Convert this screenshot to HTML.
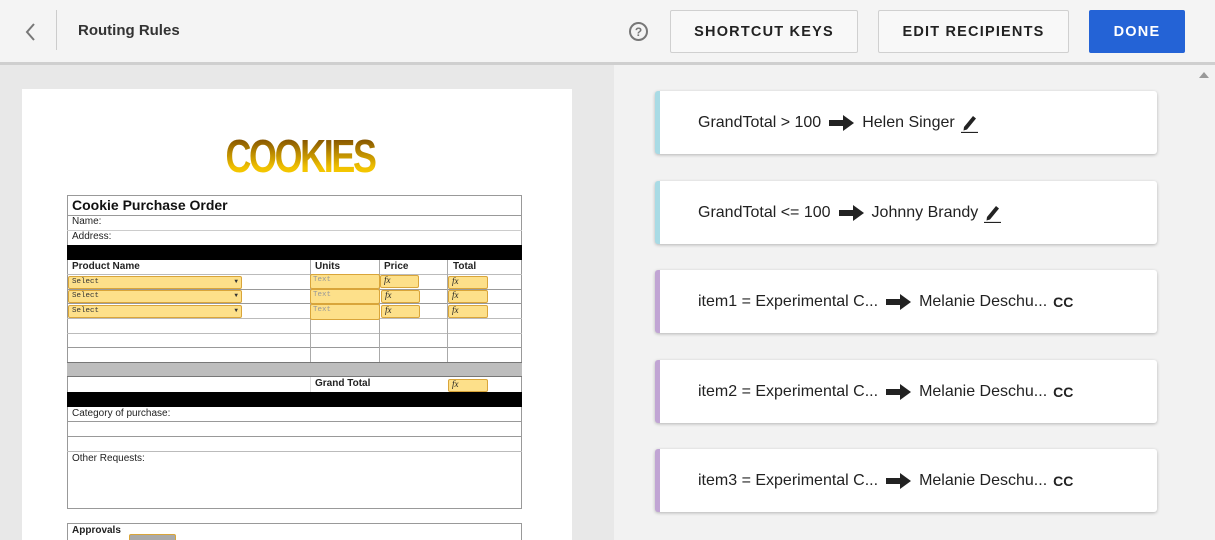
<!DOCTYPE html>
<html style="overflow:hidden;width:1215px;height:540px"><head><meta charset="utf-8"><style>
*{box-sizing:border-box;margin:0;padding:0}
body{width:1215px;height:540px;overflow:hidden;background:#f2f2f2;font-family:"Liberation Sans",sans-serif;position:relative}
.hdr{position:absolute;left:0;top:0;width:1215px;height:65px;background:#f4f4f4;border-bottom:3px solid #cfcfcf}
.btn{position:absolute;top:10px;height:43px;border:1px solid #d0d0d0;background:#f8f8f8;border-radius:2px;font-weight:bold;font-size:14.5px;letter-spacing:1.2px;color:#222;display:flex;align-items:center;justify-content:center}
.left{position:absolute;left:0;top:65px;width:614px;height:475px;background:#e8e8e8}
.paper{position:absolute;left:22px;top:89px;width:550px;height:451px;background:#fff}
.a{position:absolute}
.hl{position:absolute;height:1px;background:#999}
.vl{position:absolute;width:1px;background:#aaa}
.t{position:absolute;font-size:10px;color:#222;font-family:"Liberation Sans",sans-serif}
.f{position:absolute;background:#fde08a;border:1.5px solid #d9a53a;border-radius:2px}
.ft{font-family:"Liberation Serif",serif;font-style:italic;font-size:9px;color:#222;padding-left:3px;line-height:9px}
.sel{font-family:"Liberation Mono",monospace;font-size:7.5px;color:#333;padding-left:3px;line-height:10px}
.txt{font-family:"Liberation Mono",monospace;font-size:7.5px;color:#999;padding-left:2px;line-height:10px}
.card{position:absolute;left:655px;width:502px;height:63px;background:#fff;border-radius:3px;box-shadow:0 1px 3px rgba(0,0,0,.25);border-left:5px solid #a9dbe5;font-size:16px;color:#222;display:flex;align-items:center;padding-left:38px}
.card.p{border-left-color:#c1a5d4}
.arr{display:inline-block;width:26px;height:18px;margin:0 7px 0 8px;vertical-align:middle}
.cc{font-weight:bold;font-size:14px;margin-left:6px}
</style></head><body>
<div class="hdr">
 <svg class="a" style="left:24px;top:22px" width="14" height="20"><path d="M10 2 L3 10 L10 18" stroke="#777" stroke-width="2" fill="none"/></svg>
 <div class="a" style="left:56px;top:10px;width:1px;height:40px;background:#ccc"></div>
 <div class="a" style="left:78px;top:22px;font-size:15px;font-weight:bold;color:#333">Routing Rules</div>
 <svg class="a" style="left:628px;top:21px" width="21" height="21"><circle cx="10.5" cy="10.5" r="8.5" stroke="#777" stroke-width="2" fill="none"/><text x="10.5" y="15" text-anchor="middle" font-size="12" font-weight="bold" fill="#777" font-family="Liberation Sans">?</text></svg>
 <div class="btn" style="left:670px;width:188px">SHORTCUT KEYS</div>
 <div class="btn" style="left:878px;width:191px">EDIT RECIPIENTS</div>
 <div class="btn" style="left:1089px;width:96px;background:#2463d6;border-color:#2463d6;color:#fff">DONE</div>
</div>
<div class="left"></div>
<svg class="a" style="left:1199px;top:72px" width="10" height="7"><path d="M0 6 L5 0 L10 6Z" fill="#999"/></svg>
<div class="paper"></div>
<div class="a" style="left:200px;top:128px;width:200px;text-align:center;font-family:'Liberation Sans Narrow','Liberation Sans',sans-serif;font-weight:bold;font-size:46px;line-height:56px;letter-spacing:-3px;white-space:nowrap;transform:scaleX(.78);background:linear-gradient(#5a2a00,#f0c000 70%,#ffd800);-webkit-background-clip:text;background-clip:text;color:transparent">COOKIES</div>
<div class="a" style="left:67px;top:195px;width:455px;height:314px;border:1px solid #999"></div>
<div class="hl" style="left:67px;top:215px;width:455px"></div>
<div class="hl" style="left:67px;top:230px;width:455px;background:#ccc"></div>
<div class="a" style="left:67px;top:245px;width:455px;height:15px;background:#000"></div>
<div class="hl" style="left:67px;top:274px;width:455px;background:#bbb"></div>
<div class="hl" style="left:67px;top:289px;width:455px"></div>
<div class="hl" style="left:67px;top:303px;width:455px"></div>
<div class="hl" style="left:67px;top:318px;width:455px;background:#bbb"></div>
<div class="hl" style="left:67px;top:333px;width:455px;background:#bbb"></div>
<div class="hl" style="left:67px;top:347px;width:455px"></div>
<div class="a" style="left:67px;top:362px;width:455px;height:15px;background:#bdbdbd;border-top:1px solid #777;border-bottom:1px solid #777"></div>
<div class="a" style="left:67px;top:392px;width:455px;height:15px;background:#000"></div>
<div class="hl" style="left:67px;top:421px;width:455px"></div>
<div class="hl" style="left:67px;top:436px;width:455px"></div>
<div class="hl" style="left:67px;top:451px;width:455px;background:#bbb"></div>
<div class="vl" style="left:310px;top:260px;height:102px"></div>
<div class="vl" style="left:379px;top:260px;height:102px"></div>
<div class="vl" style="left:447px;top:260px;height:102px"></div>
<div class="vl" style="left:310px;top:377px;height:15px;background:#ddd"></div>
<div class="t" style="left:72px;top:197px;font-size:14px;font-weight:bold;color:#111">Cookie Purchase Order</div>
<div class="t" style="left:72px;top:216px">Name:</div>
<div class="t" style="left:72px;top:231px">Address:</div>
<div class="t" style="left:72px;top:261px;font-weight:bold">Product Name</div>
<div class="t" style="left:315px;top:261px;font-weight:bold">Units</div>
<div class="t" style="left:384px;top:261px;font-weight:bold">Price</div>
<div class="t" style="left:453px;top:261px;font-weight:bold">Total</div>
<div class="t" style="left:315px;top:378px;font-weight:bold">Grand Total</div>
<div class="t" style="left:72px;top:408px">Category of purchase:</div>
<div class="t" style="left:72px;top:453px">Other Requests:</div>
<div class="f sel" style="left:68px;top:276px;width:174px;height:13px">Select<span style="position:absolute;right:3px;font-size:6px">▼</span></div>
<div class="f sel" style="left:68px;top:290px;width:174px;height:13px">Select<span style="position:absolute;right:3px;font-size:6px">▼</span></div>
<div class="f sel" style="left:68px;top:305px;width:174px;height:13px">Select<span style="position:absolute;right:3px;font-size:6px">▼</span></div>
<div class="f txt" style="left:310px;top:274px;width:70px;height:15px">Text</div>
<div class="f txt" style="left:310px;top:289px;width:70px;height:15px">Text</div>
<div class="f txt" style="left:310px;top:304px;width:70px;height:16px">Text</div>
<div class="f ft" style="left:380px;top:275px;width:39px;height:13px">fx</div>
<div class="f ft" style="left:381px;top:290px;width:39px;height:13px">fx</div>
<div class="f ft" style="left:381px;top:305px;width:39px;height:13px">fx</div>
<div class="f ft" style="left:448px;top:276px;width:40px;height:13px">fx</div>
<div class="f ft" style="left:448px;top:290px;width:40px;height:13px">fx</div>
<div class="f ft" style="left:448px;top:305px;width:40px;height:13px">fx</div>
<div class="f ft" style="left:448px;top:379px;width:40px;height:13px">fx</div>
<div class="a" style="left:67px;top:523px;width:455px;height:17px;border:1px solid #999;border-bottom:none"></div>
<div class="t" style="left:72px;top:525px;font-weight:bold">Approvals</div>
<div class="a" style="left:129px;top:534px;width:47px;height:6px;background:#aaa;border:1px solid #d9a53a;border-bottom:none;border-radius:2px 2px 0 0"></div>
<svg width="0" height="0" style="position:absolute"><defs>
<symbol id="ar" viewBox="0 0 26 18"><path d="M0 6 H14 V1 L25 9 L14 17 V12 H0Z" fill="#222"/></symbol>
<symbol id="pen" viewBox="0 0 18 20"><path d="M4 14 L13 3 L16 5.5 L7 16.5 L3.5 17.5Z" fill="#222"/><path d="M1 19.5 H18" stroke="#222" stroke-width="1.3"/></symbol>
</defs></svg>
<div class="card" style="top:91px">GrandTotal &gt; 100<svg class="arr"><use href="#ar"/></svg>Helen Singer<svg style="margin-left:5px" width="18" height="20"><use href="#pen"/></svg></div>
<div class="card" style="top:181px">GrandTotal &lt;= 100<svg class="arr"><use href="#ar"/></svg>Johnny Brandy<svg style="margin-left:5px" width="18" height="20"><use href="#pen"/></svg></div>
<div class="card p" style="top:270px">item1 = Experimental C...<svg class="arr"><use href="#ar"/></svg>Melanie Deschu...<span class="cc">CC</span></div>
<div class="card p" style="top:360px">item2 = Experimental C...<svg class="arr"><use href="#ar"/></svg>Melanie Deschu...<span class="cc">CC</span></div>
<div class="card p" style="top:449px">item3 = Experimental C...<svg class="arr"><use href="#ar"/></svg>Melanie Deschu...<span class="cc">CC</span></div>
</body></html>
